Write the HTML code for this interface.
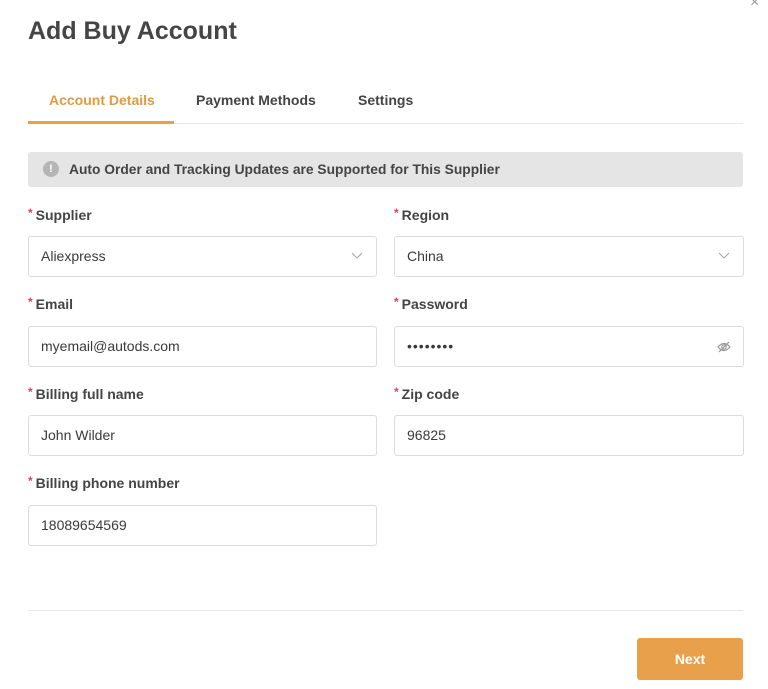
<!DOCTYPE html>
<html><head><style>
body{margin:0;width:768px;height:689px;background:#fff;font-family:"Liberation Sans",sans-serif;color:#444;position:relative;overflow:hidden}
.a{position:absolute}
.lbl{font-size:14px;color:#444;font-weight:bold}
.lbl b{color:#e0405a;font-size:12px;position:relative;top:-3px;margin-right:3px}
.in{position:absolute;height:41px;border:1px solid #dcdcdc;border-radius:3px;box-sizing:border-box;font-size:14px;color:#3a3a3a;padding-left:12px;line-height:39px}
.chev{position:absolute;right:13px;top:15px}
</style></head><body>
<div class="a" style="left:750px;top:-6px;font-size:16px;color:#999">×</div>
<div class="a" style="left:28px;top:17px;font-size:25px;font-weight:bold;color:#454545">Add Buy Account</div>
<div class="a" style="left:49px;top:92px;font-size:14px;font-weight:bold;color:#e29a3f">Account Details</div>
<div class="a" style="left:196px;top:92px;font-size:14px;font-weight:bold;color:#444">Payment Methods</div>
<div class="a" style="left:358px;top:92px;font-size:14px;font-weight:bold;color:#444">Settings</div>
<div class="a" style="left:28px;top:123px;width:715px;height:1px;background:#e8e8e8"></div>
<div class="a" style="left:28px;top:121px;width:146px;height:3px;background:#e8a04a"></div>
<div class="a" style="left:28px;top:152px;width:715px;height:35px;background:#e5e5e5;border-radius:3px"></div>
<div class="a" style="left:43px;top:161px;width:16px;height:16px;border-radius:50%;background:#b5b5b5;color:#fff;font-size:11px;font-weight:bold;text-align:center;line-height:16px">!</div>
<div class="a" style="left:69px;top:162px;font-size:13.8px;font-weight:bold;color:#444">Auto Order and Tracking Updates are Supported for This Supplier</div>

<div class="a lbl" style="left:28px;top:207px"><b>*</b>Supplier</div>
<div class="a lbl" style="left:394px;top:207px"><b>*</b>Region</div>
<div class="in" style="left:28px;top:236px;width:349px">Aliexpress<svg class="chev" width="12" height="8" viewBox="0 0 12 8"><path d="M1 1L6 6L11 1" fill="none" stroke="#aaa" stroke-width="1.1"/></svg></div>
<div class="in" style="left:394px;top:236px;width:350px">China<svg class="chev" width="12" height="8" viewBox="0 0 12 8"><path d="M1 1L6 6L11 1" fill="none" stroke="#aaa" stroke-width="1.1"/></svg></div>

<div class="a lbl" style="left:28px;top:296px"><b>*</b>Email</div>
<div class="a lbl" style="left:394px;top:296px"><b>*</b>Password</div>
<div class="in" style="left:28px;top:326px;width:349px">myemail@autods.com</div>
<div class="in" style="left:394px;top:326px;width:350px;letter-spacing:1px">••••••••<svg style="position:absolute;right:12px;top:14px" width="14" height="12" viewBox="0 0 14 12"><path d="M1 6Q7 -1 13 6Q7 13 1 6Z" fill="none" stroke="#999" stroke-width="1.2"/><circle cx="7" cy="6" r="2.2" fill="none" stroke="#999" stroke-width="1.2"/><path d="M2 11L12 1" stroke="#999" stroke-width="1.2"/></svg></div>

<div class="a lbl" style="left:28px;top:386px"><b>*</b>Billing full name</div>
<div class="a lbl" style="left:394px;top:386px"><b>*</b>Zip code</div>
<div class="in" style="left:28px;top:415px;width:349px">John Wilder</div>
<div class="in" style="left:394px;top:415px;width:350px">96825</div>

<div class="a lbl" style="left:28px;top:475px"><b>*</b>Billing phone number</div>
<div class="in" style="left:28px;top:505px;width:349px">18089654569</div>

<div class="a" style="left:28px;top:610px;width:715px;height:1px;background:#e8e8e8"></div>
<div class="a" style="left:637px;top:638px;width:106px;height:42px;background:#e8a04a;border-radius:3px;color:#fff;font-size:14px;font-weight:bold;text-align:center;line-height:42px">Next</div>
</body></html>
